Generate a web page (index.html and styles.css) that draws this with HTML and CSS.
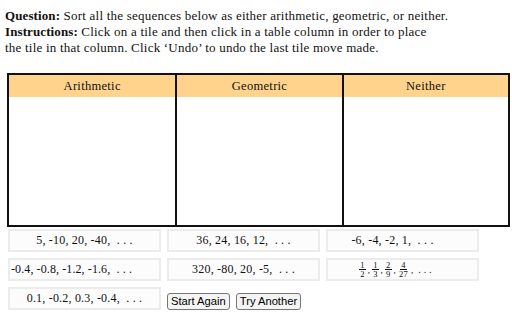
FILE: index.html
```html
<!DOCTYPE html>
<html>
<head>
<meta charset="utf-8">
<link rel="stylesheet" href="styles.css">
</head>
<body>
<div class="page">
  <p class="intro"><b>Question:</b> Sort all the sequences below as either arithmetic, geometric, or neither.<br><b>Instructions:</b> Click on a tile and then click in a table column in order to place<br>the tile in that column. Click ‘Undo’ to undo the last tile move made.</p>
  <div class="table">
    <div class="col">
      <div class="head">Arithmetic</div>
      <div class="body"></div>
    </div>
    <div class="col">
      <div class="head">Geometric</div>
      <div class="body"></div>
    </div>
    <div class="col">
      <div class="head">Neither</div>
      <div class="body"></div>
    </div>
  </div>
  <div class="tiles">
    <div class="tile">5, -10, 20, -40, &nbsp;. . .</div>
    <div class="tile">36, 24, 16, 12, &nbsp;. . .</div>
    <div class="tile shift">-6, -4, -2, 1, &nbsp;. . .</div>
    <div class="tile left">-0.4, -0.8, -1.2, -1.6, &nbsp;. . .</div>
    <div class="tile">320, -80, 20, -5, &nbsp;. . .</div>
    <div class="tile shift frac-tile">
      <span class="frac"><span class="num">1</span><span class="den">2</span></span>,
      <span class="frac"><span class="num">1</span><span class="den">3</span></span>,
      <span class="frac"><span class="num">2</span><span class="den">9</span></span>,
      <span class="frac"><span class="num">4</span><span class="den">27</span></span>, &nbsp;<span class="dots">. . .</span>
    </div>
    <div class="tile">0.1, -0.2, 0.3, -0.4, &nbsp;. . .</div>
    <div class="buttons">
      <button class="btn">Start Again</button>
      <button class="btn">Try Another</button>
    </div>
  </div>
</div>
</body>
</html>
```
FILE: styles.css
```css
html, body {
  margin: 0;
  padding: 0;
  background: #ffffff;
}
.page {
  padding: 8px 0 0 5px;
  font-family: "Liberation Serif", "DejaVu Serif", serif;
  color: #111;
}
.intro {
  margin: 0;
  font-size: 13px;
  letter-spacing: 0.22px;
  line-height: 16px;
}
.intro b {
  font-weight: bold;
  letter-spacing: 0.1px;
}
.table {
  margin: 17px 0 0 2px;
  width: 499px;
  border: 2px solid #111;
  display: grid;
  grid-template-columns: 1fr 1fr 1fr;
  height: 150px;
}
.col {
  display: flex;
  flex-direction: column;
  border-left: 2px solid #111;
}
.col:first-child {
  border-left: none;
}
.head {
  background: #ffd38c;
  height: 22px;
  line-height: 22px;
  text-align: center;
  font-size: 12.5px;
  letter-spacing: 0.3px;
}
.body {
  flex: 1;
}
.tiles {
  margin: 2px 0 0 3px;
  display: grid;
  grid-template-columns: 153px 153px 153px;
  column-gap: 6px;
  row-gap: 6px;
  font-size: 12px;
  letter-spacing: 0.2px;
}
.tile {
  height: 19px;
  border: 2px solid #ececec;
  background: #fcfcfc;
  display: flex;
  align-items: center;
  justify-content: center;
  white-space: nowrap;
}
.tile.left {
  justify-content: flex-start;
  padding-left: 1px;
  letter-spacing: 0.1px;
}
.tile.shift {
  padding-right: 20px;
}
.frac-tile {
  font-size: 9px;
  padding-left: 4px;
}
.frac {
  display: inline-flex;
  flex-direction: column;
  align-items: center;
  line-height: 8px;
  font-size: 8.5px;
  margin: 0 2px;
}
.num {
  border-bottom: 0.7px solid #111;
  padding: 0 1px;
}
.den {
  padding: 0 1px;
}
.dots {
  font-size: 10px;
}
.buttons {
  display: flex;
  align-items: center;
  gap: 6px;
  padding-top: 5px;
}
.btn {
  margin: 0;
  font-family: "Liberation Sans", Arial, sans-serif;
  font-size: 11.2px;
  height: 17px;
  padding: 0 3px;
  border: 1px solid #767676;
  border-radius: 3px;
  background: #f4f4f4;
  color: #000;
  line-height: 15px;
}
```
